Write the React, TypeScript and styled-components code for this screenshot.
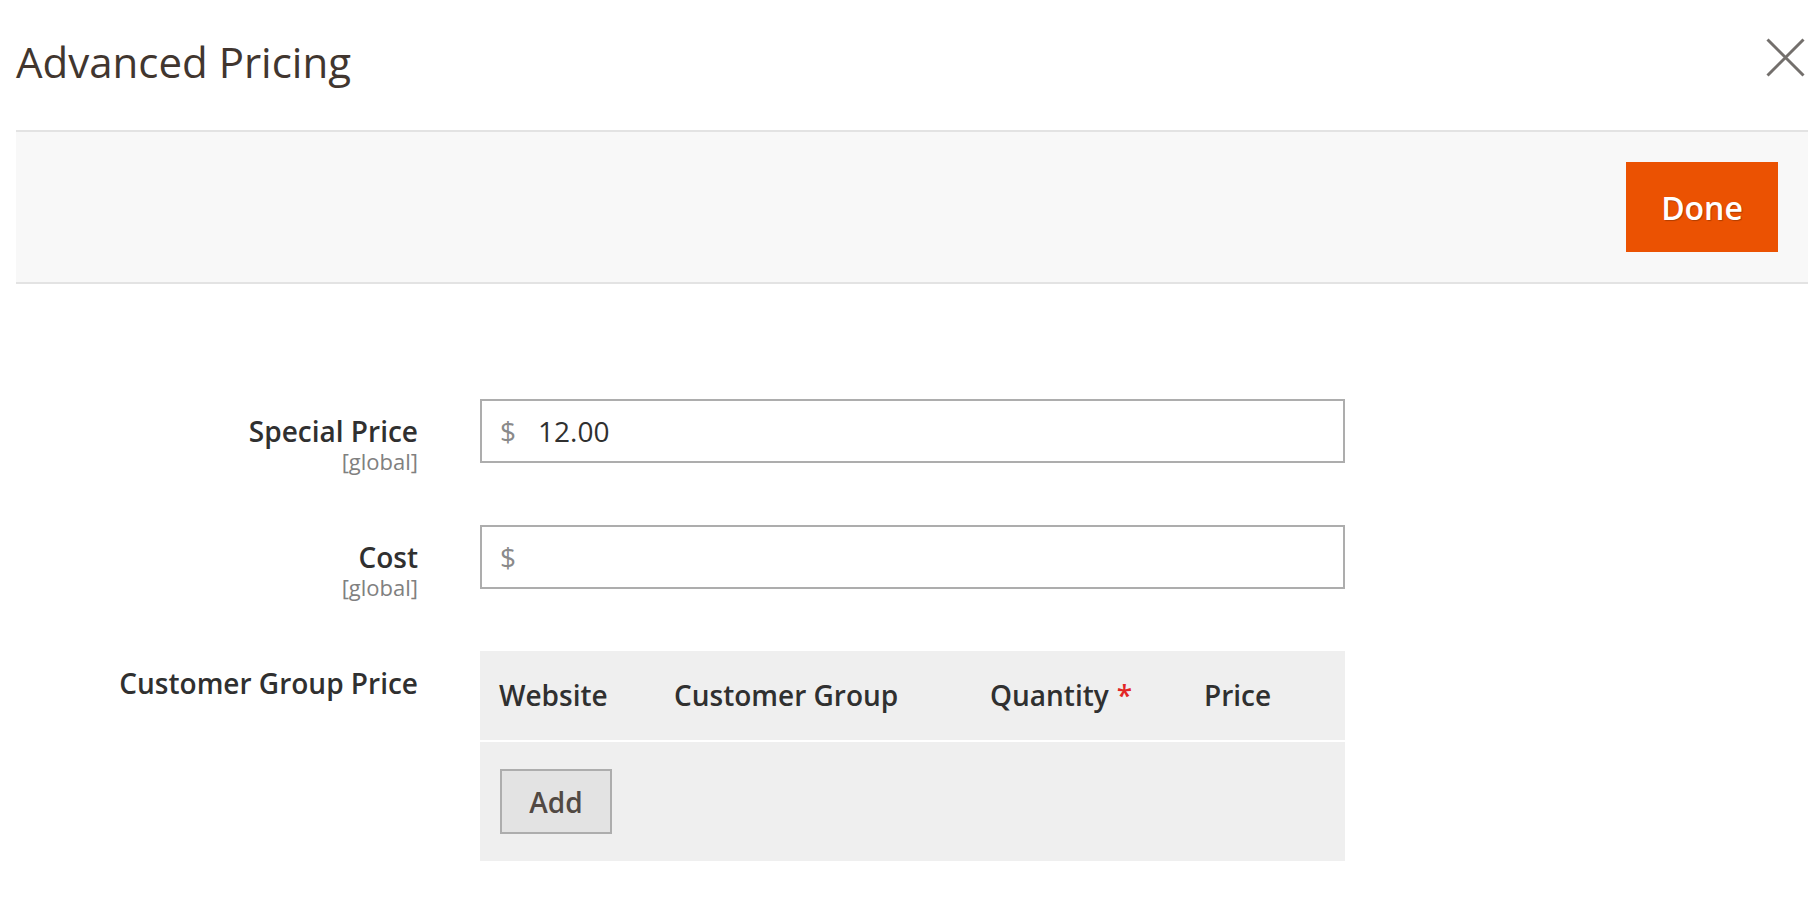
import React from 'react';
import styled, { createGlobalStyle } from 'styled-components';

const GlobalStyle = createGlobalStyle`
  html, body {
    margin: 0;
    padding: 0;
    background: #fff;
  }
  body {
    font-family: 'Open Sans', 'Noto Sans', Arial, sans-serif;
    color: #303030;
  }
  * {
    box-sizing: border-box;
  }
`;

const Page = styled.div`
  padding: 0 12px 0 16px;
  min-height: 910px;
`;

const Header = styled.header`
  height: 130px;
  display: flex;
  justify-content: space-between;
  align-items: flex-start;
`;

const Title = styled.h1`
  margin: 0;
  padding-top: 37px;
  font-size: 42px;
  line-height: 50px;
  font-weight: 400;
  color: #41362f;
`;

const CloseButton = styled.button`
  margin: 38px 3px 0 0;
  padding: 0;
  border: none;
  background: transparent;
  width: 39px;
  height: 39px;
  color: #736f6c;
  cursor: pointer;
  display: flex;
`;

const ActionBar = styled.div`
  background: #f8f8f8;
  border-top: 2px solid #e3e3e3;
  border-bottom: 2px solid #e3e3e3;
  padding: 30px;
  display: flex;
  justify-content: flex-end;
`;

const PrimaryButton = styled.button`
  width: 152px;
  height: 90px;
  border: none;
  background: #eb5202;
  color: #fff;
  font-family: 'Open Sans', Arial, sans-serif;
  font-size: 32px;
  font-weight: 600;
  text-shadow: 1px 1px 1px rgba(0, 0, 0, 0.25);
  cursor: pointer;
`;

const Form = styled.div`
  padding-top: 115px;
  display: flex;
  flex-direction: column;
  gap: 52px;
`;

const FieldRow = styled.div`
  display: grid;
  grid-template-columns: 402px 865px;
  column-gap: 62px;
  align-items: start;
`;

const FieldLabel = styled.div`
  text-align: right;
  padding-top: 14px;
`;

const LabelText = styled.div`
  font-size: 28px;
  line-height: 36px;
  font-weight: 600;
  color: #303030;
`;

const Scope = styled.div`
  font-size: 22px;
  line-height: 24px;
  color: #808080;
`;

const InputBox = styled.label`
  height: 64px;
  border: 2px solid #adadad;
  background: #fff;
  display: flex;
  align-items: center;
  padding-left: 18px;
`;

const Currency = styled.span`
  font-size: 28px;
  color: #8a8a8a;
  margin-right: 22px;
`;

const TextInput = styled.input`
  flex: 1;
  height: 100%;
  border: none;
  outline: none;
  background: transparent;
  padding: 0;
  font-family: 'Open Sans', Arial, sans-serif;
  font-size: 28px;
  color: #303030;
`;

const Grid = styled.table`
  width: 865px;
  border-collapse: collapse;
  table-layout: fixed;
  background: #efefef;
`;

const HeadCell = styled.th<{ $w?: number }>`
  width: ${(p) => (p.$w ? `${p.$w}px` : 'auto')};
  padding: 25px 19px;
  line-height: 39px;
  font-size: 28px;
  font-weight: 600;
  text-align: left;
  color: #303030;
  border-bottom: 2px solid #fff;
  white-space: nowrap;
`;

const Required = styled.span`
  color: #e22626;
  margin-left: 8px;
`;

const BodyCell = styled.td`
  padding: 27px 20px;
`;

const SecondaryButton = styled.button`
  width: 112px;
  height: 65px;
  border: 2px solid #adadad;
  background: #e3e3e3;
  color: #514943;
  font-family: 'Open Sans', Arial, sans-serif;
  font-size: 28px;
  font-weight: 600;
  padding: 0;
  cursor: pointer;
`;

export default function App() {
  return (
    <Page>
      <GlobalStyle />
      <Header>
        <Title>Advanced Pricing</Title>
        <CloseButton aria-label="Close">
          <svg width="39" height="39" viewBox="0 0 39 39" fill="none">
            <path d="M1.5 1.5L37.5 37.5M37.5 1.5L1.5 37.5" stroke="currentColor" strokeWidth="3" />
          </svg>
        </CloseButton>
      </Header>

      <ActionBar>
        <PrimaryButton>Done</PrimaryButton>
      </ActionBar>

      <Form>
        <FieldRow>
          <FieldLabel>
            <LabelText>Special Price</LabelText>
            <Scope>[global]</Scope>
          </FieldLabel>
          <InputBox>
            <Currency>$</Currency>
            <TextInput defaultValue="12.00" />
          </InputBox>
        </FieldRow>

        <FieldRow>
          <FieldLabel>
            <LabelText>Cost</LabelText>
            <Scope>[global]</Scope>
          </FieldLabel>
          <InputBox>
            <Currency>$</Currency>
            <TextInput defaultValue="" />
          </InputBox>
        </FieldRow>

        <FieldRow>
          <FieldLabel>
            <LabelText>Customer Group Price</LabelText>
          </FieldLabel>
          <Grid>
            <thead>
              <tr>
                <HeadCell $w={175}>Website</HeadCell>
                <HeadCell $w={316}>Customer Group</HeadCell>
                <HeadCell $w={214}>
                  Quantity<Required>*</Required>
                </HeadCell>
                <HeadCell>Price</HeadCell>
              </tr>
            </thead>
            <tbody>
              <tr>
                <BodyCell colSpan={4}>
                  <SecondaryButton>Add</SecondaryButton>
                </BodyCell>
              </tr>
            </tbody>
          </Grid>
        </FieldRow>
      </Form>
    </Page>
  );
}
